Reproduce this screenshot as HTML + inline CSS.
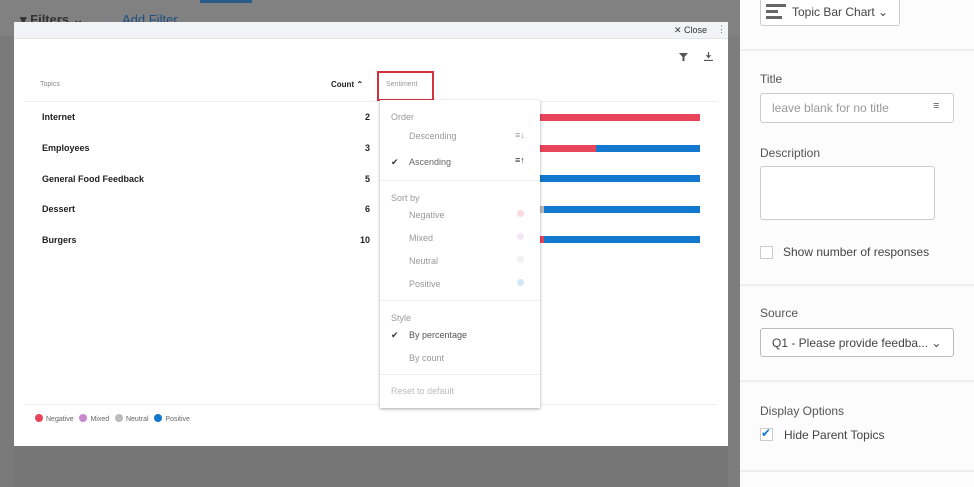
<!DOCTYPE html>
<html><head><style>
*{box-sizing:border-box;margin:0;padding:0}
body{width:974px;height:487px;overflow:hidden;position:relative;background:#767676;font-family:"Liberation Sans",sans-serif;}
.abs{position:absolute}
.t{position:absolute;white-space:nowrap}
.dot{display:inline-block;width:8px;height:8px;border-radius:50%;vertical-align:-1px;margin-right:3px}
</style></head><body>
<div class="abs" style="left:0;top:0;width:740px;height:36px;background:#818181"></div>
<div class="abs" style="left:200px;top:0;width:52px;height:3px;background:#2a5a8a"></div>
<div class="t" style="left:20px;top:12px;font-size:13px;color:#333;font-weight:bold">▾ Filters ⌄</div>
<div class="t" style="left:122px;top:12px;font-size:13px;color:#1d4f80">Add Filter</div>
<div class="abs" style="left:0;top:36px;width:14px;height:451px;background:#7a7a7a"></div>
<div class="abs" style="left:728px;top:36px;width:12px;height:451px;background:#7d7d7d"></div>
<!-- modal -->
<div class="abs" style="left:14px;top:22px;width:714px;height:424px;background:#fff">
 <div class="abs" style="left:0;top:0;width:714px;height:17px;background:#f2f3f7;border-bottom:1px solid #e4e4e8"></div>
 <div class="t" style="left:660px;top:3px;font-size:9px;color:#333">✕ Close</div>
 <div class="t" style="left:703px;top:2px;font-size:9px;color:#666">⋮</div>
 <svg class="abs" style="left:665px;top:30px" width="9" height="9"><path d="M0 1h9L5.5 5v4H3.5V5z" fill="#555"/></svg>
 <svg class="abs" style="left:690px;top:30px" width="9" height="9"><path d="M4.5 0v5M2.5 3l2 2.5 2-2.5M0 8.5h9" stroke="#555" stroke-width="1.2" fill="none"/></svg>
 <div class="t" style="left:26px;top:59px;font-size:7px;color:#888">Topics</div>
 <div class="t" style="left:317px;top:58px;font-size:8px;color:#222;font-weight:bold">Count ⌃</div>
 <div class="abs" style="left:363px;top:49px;width:57px;height:30px;border:2.5px solid #d2343f"></div>
 <div class="t" style="left:372px;top:59px;font-size:7px;color:#999">Sentiment</div>
 <div class="abs" style="left:10px;top:79px;width:693px;height:1px;background:#eee"></div>
 <div class="abs" style="left:10px;top:382px;width:693px;height:1px;background:#eee"></div>
 <div class="t" style="left:28px;top:90px;font-size:9px;font-weight:bold;color:#222">Internet</div>
 <div class="t" style="left:28px;top:121px;font-size:9px;font-weight:bold;color:#222">Employees</div>
 <div class="t" style="left:28px;top:152px;font-size:9px;font-weight:bold;color:#222">General Food Feedback</div>
 <div class="t" style="left:28px;top:182px;font-size:9px;font-weight:bold;color:#222">Dessert</div>
 <div class="t" style="left:28px;top:213px;font-size:9px;font-weight:bold;color:#222">Burgers</div>
 <div class="t" style="left:351px;top:90px;font-size:9px;font-weight:bold;color:#222">2</div>
 <div class="t" style="left:351px;top:121px;font-size:9px;font-weight:bold;color:#222">3</div>
 <div class="t" style="left:351px;top:152px;font-size:9px;font-weight:bold;color:#222">5</div>
 <div class="t" style="left:351px;top:182px;font-size:9px;font-weight:bold;color:#222">6</div>
 <div class="t" style="left:346px;top:213px;font-size:9px;font-weight:bold;color:#222">10</div>
 <div class="abs" style="left:520px;top:92px;width:166px;height:7px;background:#e8445a"></div>
 <div class="abs" style="left:520px;top:123px;width:62px;height:7px;background:#e8445a"></div>
 <div class="abs" style="left:582px;top:123px;width:104px;height:7px;background:#1279cf"></div>
 <div class="abs" style="left:520px;top:153px;width:166px;height:7px;background:#1279cf"></div>
 <div class="abs" style="left:520px;top:184px;width:10px;height:7px;background:#bbb"></div>
 <div class="abs" style="left:530px;top:184px;width:156px;height:7px;background:#1279cf"></div>
 <div class="abs" style="left:520px;top:214px;width:10px;height:7px;background:#e8445a"></div>
 <div class="abs" style="left:530px;top:214px;width:156px;height:7px;background:#1279cf"></div>
 <div class="t" style="left:21px;top:392px;font-size:7px;color:#666"><span class="dot" style="background:#e8445a"></span>Negative &nbsp;&nbsp;<span class="dot" style="background:#c987d0"></span>Mixed &nbsp;&nbsp;<span class="dot" style="background:#bbb"></span>Neutral &nbsp;&nbsp;<span class="dot" style="background:#1279cf"></span>Positive</div>
</div>
<!-- dropdown -->
<div class="abs" style="left:380px;top:100px;width:160px;height:308px;background:#fff;box-shadow:0 1px 3px rgba(0,0,0,.35);font-size:9px;color:#999">
 <div class="t" style="left:11px;top:12px">Order</div>
 <div class="t" style="left:29px;top:31px">Descending</div>
 <div class="t" style="left:135px;top:30px;font-size:9px">≡↓</div>
 <div class="t" style="left:11px;top:57px;color:#333">✔</div>
 <div class="t" style="left:29px;top:57px;color:#666">Ascending</div>
 <div class="t" style="left:135px;top:55px;font-size:9px;color:#333">≡↑</div>
 <div class="abs" style="left:0;top:80px;width:160px;height:1px;background:#eee"></div>
 <div class="t" style="left:11px;top:93px">Sort by</div>
 <div class="t" style="left:29px;top:110px">Negative</div>
 <div class="t" style="left:29px;top:133px">Mixed</div>
 <div class="t" style="left:29px;top:156px">Neutral</div>
 <div class="t" style="left:29px;top:179px">Positive</div>
 <div class="abs" style="left:137px;top:110px;width:7px;height:7px;border-radius:50%;background:#fadadf"></div>
 <div class="abs" style="left:137px;top:133px;width:7px;height:7px;border-radius:50%;background:#f4e5f5"></div>
 <div class="abs" style="left:137px;top:156px;width:7px;height:7px;border-radius:50%;background:#f0f0f0"></div>
 <div class="abs" style="left:137px;top:179px;width:7px;height:7px;border-radius:50%;background:#d3e6f7"></div>
 <div class="abs" style="left:0;top:200px;width:160px;height:1px;background:#eee"></div>
 <div class="t" style="left:11px;top:213px">Style</div>
 <div class="t" style="left:11px;top:230px;color:#333">✔</div>
 <div class="t" style="left:29px;top:230px;color:#555">By percentage</div>
 <div class="t" style="left:29px;top:253px">By count</div>
 <div class="abs" style="left:0;top:274px;width:160px;height:1px;background:#eee"></div>
 <div class="t" style="left:11px;top:286px;color:#bbb">Reset to default</div>
</div>
<!-- right panel -->
<div class="abs" style="left:740px;top:0;width:234px;height:487px;background:#fcfcfc;font-size:12px;color:#555">
 <div class="abs" style="left:20px;top:-2px;width:140px;height:28px;border:1px solid #ccc;border-radius:3px;background:#fff"></div>
 <div class="abs" style="left:26px;top:4px;width:20px;height:3px;background:#666"></div>
 <div class="abs" style="left:26px;top:10px;width:12px;height:3px;background:#666"></div>
 <div class="abs" style="left:26px;top:16px;width:16px;height:3px;background:#666"></div>
 <div class="t" style="left:52px;top:5px;color:#444">Topic Bar Chart ⌄</div>
 <div class="abs" style="left:0;top:49px;width:234px;height:2px;background:#eee"></div>
 <div class="t" style="left:20px;top:72px">Title</div>
 <div class="abs" style="left:20px;top:93px;width:194px;height:30px;border:1px solid #ccc;border-radius:3px;background:#fff"></div>
 <div class="t" style="left:32px;top:101px;color:#999">leave blank for no title</div>
 <div class="t" style="left:193px;top:100px;color:#666;font-size:11px">≡</div>
 <div class="t" style="left:20px;top:146px">Description</div>
 <div class="abs" style="left:20px;top:166px;width:175px;height:54px;border:1px solid #ccc;border-radius:3px;background:#fff"></div>
 <div class="abs" style="left:20px;top:246px;width:13px;height:13px;border:1px solid #ccc;background:#fff"></div>
 <div class="t" style="left:43px;top:245px;color:#444">Show number of responses</div>
 <div class="abs" style="left:0;top:284px;width:234px;height:2px;background:#eee"></div>
 <div class="t" style="left:20px;top:306px">Source</div>
 <div class="abs" style="left:20px;top:328px;width:194px;height:29px;border:1px solid #bbb;border-radius:3px;background:#fff"></div>
 <div class="t" style="left:32px;top:336px;color:#444">Q1 - Please provide feedba... ⌄</div>
 <div class="abs" style="left:0;top:380px;width:234px;height:2px;background:#eee"></div>
 <div class="t" style="left:20px;top:404px">Display Options</div>
 <div class="abs" style="left:20px;top:428px;width:13px;height:13px;border:1px solid #ccc;background:#fff"></div>
 <div class="t" style="left:21px;top:426px;color:#1279cf;font-size:12px">✔</div>
 <div class="t" style="left:44px;top:428px;color:#444">Hide Parent Topics</div>
 <div class="abs" style="left:0;top:470px;width:234px;height:2px;background:#eee"></div>
</div>
</body></html>
